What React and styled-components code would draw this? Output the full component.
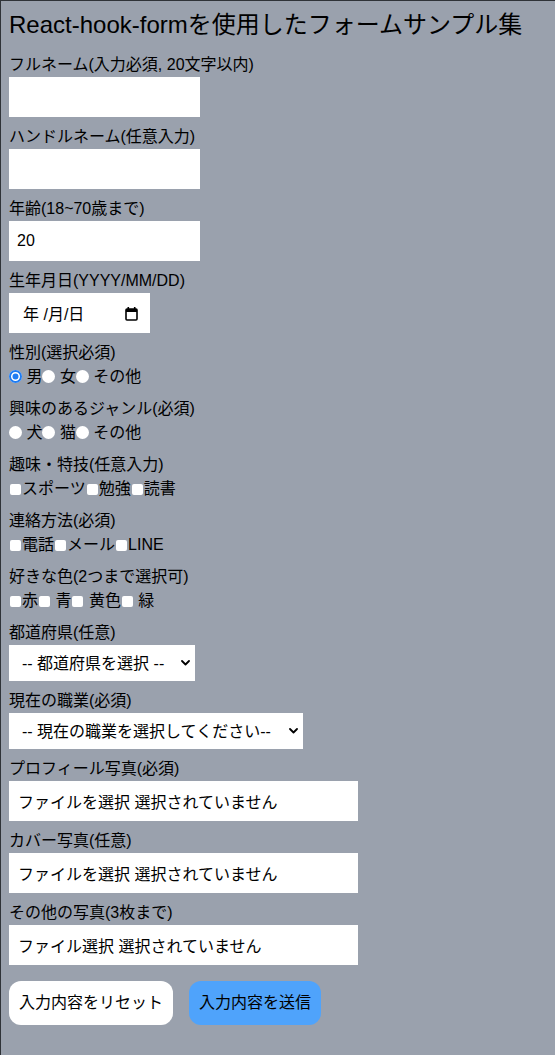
import React from 'react';
import styled, { createGlobalStyle } from 'styled-components';

const GlobalStyle = createGlobalStyle`
  html, body {
    margin: 0;
    padding: 0;
  }
  body {
    font-family: "Liberation Sans", "Noto Sans CJK JP", sans-serif;
    color: #000;
  }
  * {
    box-sizing: border-box;
  }
`;

const Page = styled.div`
  min-height: 100vh;
  background: #9aa1ad;
  border-top: 1px solid #2f3338;
  border-left: 1px solid #2f3338;
  padding: 8px 8px 24px;
`;

const Title = styled.h2`
  margin: 0 0 12px;
  font-size: 24px;
  font-weight: 400;
  line-height: 32px;
`;

const Form = styled.form`
  display: flex;
  flex-direction: column;
  gap: 8px;
`;

const Field = styled.div`
  display: flex;
  flex-direction: column;
  align-items: flex-start;
`;

const Label = styled.span`
  font-size: 16px;
  line-height: 24px;
`;

const TextInput = styled.input`
  width: 191px;
  height: 40px;
  border: none;
  padding: 0 8px;
  font-family: inherit;
  font-size: 16px;
  background: #fff;
  outline: none;
`;

const DateBox = styled.div`
  display: flex;
  align-items: center;
  justify-content: space-between;
  width: 141px;
  height: 40px;
  background: #fff;
  padding: 0 12px 0 14px;
  font-size: 16px;
`;

const Choices = styled.div`
  font-size: 16px;
  line-height: 24px;
  white-space: nowrap;
`;

const Radio = styled.input.attrs({ type: 'radio' })`
  appearance: none;
  width: 13px;
  height: 13px;
  margin: 0;
  border-radius: 50%;
  background: #fff;
  vertical-align: -1px;
  &:checked {
    background: #1f7cf2;
    box-shadow: inset 0 0 0 2px #1f7cf2, inset 0 0 0 3.5px #fff;
  }
`;

const Checkbox = styled.input.attrs({ type: 'checkbox' })`
  appearance: none;
  width: 11px;
  height: 11px;
  margin: 0 1px;
  border-radius: 2px;
  background: #fff;
  vertical-align: -1px;
`;

const SelectWrap = styled.label`
  display: flex;
  align-items: center;
  width: ${({ $width }) => $width}px;
  height: 36px;
  background: #fff;
  padding-right: 5px;
`;

const Select = styled.select`
  appearance: none;
  flex: 1;
  height: 100%;
  border: none;
  background: transparent;
  padding: 0 0 0 13px;
  font-family: inherit;
  font-size: 16px;
  color: #000;
  outline: none;
`;

const FileBox = styled.label`
  display: flex;
  align-items: center;
  width: 349px;
  height: 40px;
  background: #fff;
  padding: 0 9px;
  font-size: 16px;
  white-space: pre;
  input {
    display: none;
  }
`;

const Buttons = styled.div`
  display: flex;
  gap: 16px;
  margin-top: 8px;
`;

const Button = styled.button`
  padding: 10px;
  border: none;
  border-radius: 12px;
  font-family: inherit;
  font-size: 16px;
  line-height: 24px;
  color: #000;
  background: ${({ $primary }) => ($primary ? '#4fa3fb' : '#fff')};
`;

const CalendarIcon = () => (
  <svg width="13" height="15" viewBox="0 0 13 15">
    <rect x="1" y="3" width="11" height="11" rx="1" fill="none" stroke="#000" strokeWidth="1.6" />
    <rect x="1" y="3" width="11" height="3" fill="#000" />
    <rect x="2.5" y="1" width="1.6" height="3" fill="#000" />
    <rect x="8.9" y="1" width="1.6" height="3" fill="#000" />
  </svg>
);

const Chevron = () => (
  <svg width="9" height="6" viewBox="0 0 9 6">
    <path d="M1 1l3.5 3.5L8 1" stroke="#000" strokeWidth="1.8" fill="none" strokeLinecap="round" strokeLinejoin="round" />
  </svg>
);

const FileField = ({ label, button, multiple }) => (
  <Field>
    <Label>{label}</Label>
    <FileBox>
      <input type="file" multiple={multiple} />
      {button} 選択されていません
    </FileBox>
  </Field>
);

const App = () => (
  <Page>
    <GlobalStyle />
    <Title>React-hook-formを使用したフォームサンプル集</Title>
    <Form onSubmit={(e) => e.preventDefault()}>
      <Field>
        <Label>フルネーム(入力必須, 20文字以内)</Label>
        <TextInput type="text" />
      </Field>
      <Field>
        <Label>ハンドルネーム(任意入力)</Label>
        <TextInput type="text" />
      </Field>
      <Field>
        <Label>年齢(18~70歳まで)</Label>
        <TextInput type="number" defaultValue="20" />
      </Field>
      <Field>
        <Label>生年月日(YYYY/MM/DD)</Label>
        <DateBox>
          <span>年 /月/日</span>
          <CalendarIcon />
        </DateBox>
      </Field>
      <Field>
        <Label>性別(選択必須)</Label>
        <Choices>
          <label><Radio name="gender" defaultChecked /> 男</label>
          <label><Radio name="gender" /> 女</label>
          <label><Radio name="gender" /> その他</label>
        </Choices>
      </Field>
      <Field>
        <Label>興味のあるジャンル(必須)</Label>
        <Choices>
          <label><Radio name="genre" /> 犬</label>
          <label><Radio name="genre" /> 猫</label>
          <label><Radio name="genre" /> その他</label>
        </Choices>
      </Field>
      <Field>
        <Label>趣味・特技(任意入力)</Label>
        <Choices>
          <label><Checkbox />スポーツ</label>
          <label><Checkbox />勉強</label>
          <label><Checkbox />読書</label>
        </Choices>
      </Field>
      <Field>
        <Label>連絡方法(必須)</Label>
        <Choices>
          <label><Checkbox />電話</label>
          <label><Checkbox />メール</label>
          <label><Checkbox />LINE</label>
        </Choices>
      </Field>
      <Field>
        <Label>好きな色(2つまで選択可)</Label>
        <Choices>
          <label><Checkbox />赤</label>
          <label><Checkbox /> 青</label>
          <label><Checkbox /> 黄色</label>
          <label><Checkbox /> 緑</label>
        </Choices>
      </Field>
      <Field>
        <Label>都道府県(任意)</Label>
        <SelectWrap $width={186}>
          <Select defaultValue="">
            <option value="">-- 都道府県を選択 --</option>
          </Select>
          <Chevron />
        </SelectWrap>
      </Field>
      <Field>
        <Label>現在の職業(必須)</Label>
        <SelectWrap $width={294}>
          <Select defaultValue="">
            <option value="">-- 現在の職業を選択してください--</option>
          </Select>
          <Chevron />
        </SelectWrap>
      </Field>
      <FileField label="プロフィール写真(必須)" button="ファイルを選択" />
      <FileField label="カバー写真(任意)" button="ファイルを選択" />
      <FileField label="その他の写真(3枚まで)" button="ファイル選択" multiple />
      <Buttons>
        <Button type="reset">入力内容をリセット</Button>
        <Button type="submit" $primary>入力内容を送信</Button>
      </Buttons>
    </Form>
  </Page>
);

export default App;
